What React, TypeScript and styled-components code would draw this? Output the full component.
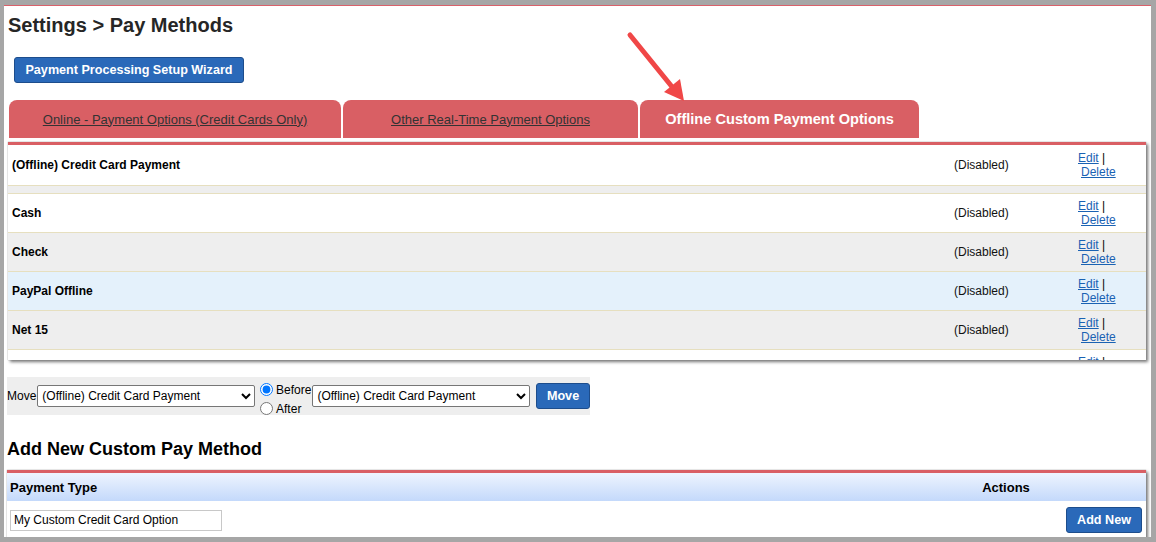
import * as React from "react";
import styled, { createGlobalStyle } from "styled-components";

interface IMethod {
    name: string;
    tone: "white" | "gray" | "blue";
}

const methods: IMethod[] = [
    { name: "Cash", tone: "white" },
    { name: "Check", tone: "gray" },
    { name: "PayPal Offline", tone: "blue" },
    { name: "Net 15", tone: "gray" },
    { name: "Net 30", tone: "white" }
];

const toneColors = {
    white: "#ffffff",
    gray: "#eeeeee",
    blue: "#e4f1fb"
};

const App: React.FC = () => {
    return (
        <Page>
            <GlobalStyle />
            <Frame>
                <Title>Settings &gt; Pay Methods</Title>
                <WizardButton>Payment Processing Setup Wizard</WizardButton>
                <Tabs>
                    <Tab width={332}>
                        <TabLink>Online - Payment Options (Credit Cards Only)</TabLink>
                    </Tab>
                    <Tab width={295}>
                        <TabLink>Other Real-Time Payment Options</TabLink>
                    </Tab>
                    <Tab width={279} active>
                        Offline Custom Payment Options
                    </Tab>
                </Tabs>
                <ListBox>
                    <List>
                        <MethodRow tone="white" tall>
                            <MethodName>(Offline) Credit Card Payment</MethodName>
                            <Status>(Disabled)</Status>
                            <Actions>
                                <span>
                                    <ActionLink>Edit</ActionLink> |
                                </span>
                                <DeleteLine>
                                    <ActionLink>Delete</ActionLink>
                                </DeleteLine>
                            </Actions>
                        </MethodRow>
                        <SpacerRow />
                        {methods.map(m => (
                            <MethodRow key={m.name} tone={m.tone}>
                                <MethodName>{m.name}</MethodName>
                                <Status>(Disabled)</Status>
                                <Actions>
                                    <span>
                                        <ActionLink>Edit</ActionLink> |
                                    </span>
                                    <DeleteLine>
                                        <ActionLink>Delete</ActionLink>
                                    </DeleteLine>
                                </Actions>
                            </MethodRow>
                        ))}
                    </List>
                </ListBox>
                <MoveBar>
                    <span>Move</span>
                    <Select defaultValue="a">
                        <option value="a">(Offline) Credit Card Payment</option>
                    </Select>
                    <Radios>
                        <RadioLabel>
                            <input type="radio" name="pos" defaultChecked />
                            Before
                        </RadioLabel>
                        <RadioLabel>
                            <input type="radio" name="pos" />
                            After
                        </RadioLabel>
                    </Radios>
                    <Select defaultValue="a">
                        <option value="a">(Offline) Credit Card Payment</option>
                    </Select>
                    <MoveButton>Move</MoveButton>
                </MoveBar>
                <SubTitle>Add New Custom Pay Method</SubTitle>
                <AddTable>
                    <AddHeader>
                        <span>Payment Type</span>
                        <ActionsHead>Actions</ActionsHead>
                    </AddHeader>
                    <AddRow>
                        <TextInput defaultValue="My Custom Credit Card Option" />
                        <AddButton>Add New</AddButton>
                    </AddRow>
                </AddTable>
            </Frame>
            <Arrow width="1156" height="542" viewBox="0 0 1156 542">
                <line x1="630" y1="35" x2="673" y2="88" stroke="#f04747" strokeWidth="5" strokeLinecap="round" />
                <polygon points="684,101 664,92 680,79" fill="#f04747" />
            </Arrow>
        </Page>
    );
};

const GlobalStyle = createGlobalStyle`
    html, body {
        margin: 0;
        padding: 0;
        background: #a6a6a6;
        font-family: "Liberation Sans", Arial, sans-serif;
    }
`;

const Page = styled.div`
    position: relative;
    width: 1156px;
    height: 542px;
    overflow: hidden;
    padding: 5px 0 0 4px;
    box-sizing: border-box;
`;

const Frame = styled.div`
    width: 1147px;
    height: 532px;
    box-sizing: border-box;
    background: #fff;
    border-top: 1px solid #d9606a;
    padding: 0 0 0 3px;
    overflow: hidden;
`;

const Title = styled.h1`
    margin: 6px 0 0 1px;
    font-size: 20px;
    line-height: 26px;
    font-weight: bold;
    color: #262626;
`;

const BlueButton = styled.button`
    background: #2a69b9;
    border: 1px solid #1d4d8c;
    border-radius: 3px;
    color: #fff;
    font-family: "Liberation Sans", Arial, sans-serif;
    font-weight: bold;
    font-size: 12.6px;
    padding: 0;
    cursor: pointer;
`;

const WizardButton = styled(BlueButton)`
    display: block;
    margin: 19px 0 0 7px;
    width: 230px;
    height: 26px;
`;

const Tabs = styled.div`
    display: flex;
    gap: 2px;
    margin: 17px 0 0 2px;
`;

const Tab = styled.div<{ width: number; active?: boolean }>`
    width: ${p => p.width}px;
    height: 38px;
    display: flex;
    align-items: center;
    justify-content: center;
    background: #d95f64;
    border-radius: 8px 8px 0 0;
    font-size: ${p => (p.active ? "14.6px" : "13px")};
    font-weight: ${p => (p.active ? "bold" : "normal")};
    color: ${p => (p.active ? "#fff" : "#333")};
`;

const TabLink = styled.a`
    color: #333;
    text-decoration: underline;
`;

const ListBox = styled.div`
    margin: 4px 0 0 1px;
    width: 1138px;
    border-top: 3px solid #d95f64;
    box-shadow: 0 0 1px #888, 2px 2px 3px #777;
`;

const List = styled.div`
    height: 215px;
    overflow: hidden;
`;

const MethodRow = styled.div<{ tone: "white" | "gray" | "blue"; tall?: boolean }>`
    display: grid;
    grid-template-columns: 1fr 120px 72px;
    align-items: center;
    height: ${p => (p.tall ? 40 : 38)}px;
    padding-left: 4px;
    background: ${p => toneColors[p.tone]};
    border-bottom: 1px solid #e6dfbf;
    font-size: 12px;
    color: #000;
`;

const SpacerRow = styled.div`
    height: 7px;
    background: #eeeeee;
    border-bottom: 1px solid #e6dfbf;
`;

const MethodName = styled.span`
    font-weight: bold;
`;

const Status = styled.span`
    color: #111;
`;

const Actions = styled.div`
    display: flex;
    flex-direction: column;
    padding-left: 4px;
    line-height: 14px;
`;

const DeleteLine = styled.span`
    padding-left: 3px;
`;

const ActionLink = styled.a`
    color: #1a62b3;
    text-decoration: underline;
`;

const MoveBar = styled.div`
    display: flex;
    align-items: center;
    width: 583px;
    height: 38px;
    margin-top: 17px;
    background: #eeeeee;
    font-size: 12px;
    color: #000;
`;

const Select = styled.select`
    width: 218px;
    height: 22px;
    margin-left: 1px;
    border: 1px solid #767676;
    border-radius: 2px;
    background: #fff;
    font-family: "Liberation Sans", Arial, sans-serif;
    font-size: 12px;
    color: #000;
`;

const Radios = styled.div`
    display: flex;
    flex-direction: column;
    margin: 0 0 0 4px;
    padding-top: 6px;
`;

const RadioLabel = styled.label`
    display: flex;
    align-items: center;
    height: 19px;
    font-size: 12px;
    input {
        margin: 0 3px 0 1px;
        width: 13px;
        height: 13px;
    }
`;

const MoveButton = styled(BlueButton)`
    width: 54px;
    height: 26px;
    margin-left: 6px;
`;

const SubTitle = styled.h2`
    margin: 23px 0 0 0;
    font-size: 18px;
    line-height: 22px;
    font-weight: bold;
    color: #000;
`;

const AddTable = styled.div`
    margin-top: 10px;
    width: 1139px;
    border-top: 3px solid #d95f64;
    box-shadow: 0 0 1px #888, 2px 2px 3px #777;
`;

const AddHeader = styled.div`
    display: grid;
    grid-template-columns: 1fr 280px;
    align-items: center;
    height: 28px;
    padding-left: 3px;
    background: linear-gradient(#eef4fe, #c4d9fb);
    font-size: 13px;
    font-weight: bold;
    color: #000;
`;

const ActionsHead = styled.span`
    text-align: center;
`;

const AddRow = styled.div`
    display: flex;
    align-items: center;
    justify-content: space-between;
    height: 38px;
    padding: 0 4px 0 3px;
    background: #fff;
`;

const TextInput = styled.input`
    width: 212px;
    height: 21px;
    box-sizing: border-box;
    border: 1px solid #c8c8c8;
    padding: 0 3px;
    font-family: "Liberation Sans", Arial, sans-serif;
    font-size: 12px;
    color: #000;
`;

const AddButton = styled(BlueButton)`
    width: 76px;
    height: 26px;
`;

const Arrow = styled.svg`
    position: absolute;
    left: 0;
    top: 0;
    pointer-events: none;
`;

export default App;
